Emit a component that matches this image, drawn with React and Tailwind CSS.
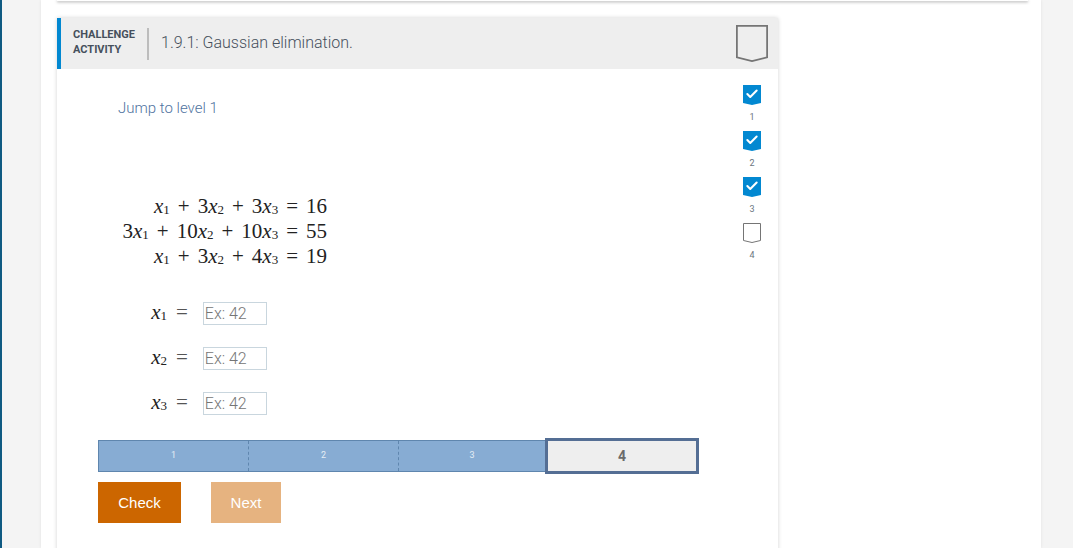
import { Check } from 'lucide-react';

const EQUATIONS = [
  [['', '1'], ['3', '2'], ['3', '3'], '16'],
  [['3', '1'], ['10', '2'], ['10', '3'], '55'],
  [['', '1'], ['3', '2'], ['4', '3'], '19'],
];

function Badge({ filled, className }) {
  return (
    <svg viewBox="0 0 18 20" className={className} preserveAspectRatio="none">
      {filled ? (
        <path d="M0 0H18V18L9 20L0 18Z" fill="#0288d1" />
      ) : (
        <path d="M.5 .5H17.5V17.5L9 19.5L.5 17.5Z" fill="none" stroke="#757575" />
      )}
    </svg>
  );
}

function Variable({ sub }) {
  return (
    <span className="inline-flex items-baseline">
      <i>x</i>
      <sub className="text-[13px] leading-none relative top-[1px] align-baseline">{sub}</sub>
    </span>
  );
}

function Term({ coef, sub }) {
  return (
    <span className="inline-flex items-baseline">
      {coef}
      <Variable sub={sub} />
    </span>
  );
}

function Equation({ terms }) {
  return (
    <div className="flex justify-end items-baseline h-[25px] leading-[25px]">
      <Term coef={terms[0][0]} sub={terms[0][1]} />
      <span className="mx-[8px]">+</span>
      <Term coef={terms[1][0]} sub={terms[1][1]} />
      <span className="mx-[8px]">+</span>
      <Term coef={terms[2][0]} sub={terms[2][1]} />
      <span className="mx-[8px]">=</span>
      <span>{terms[3]}</span>
    </div>
  );
}

function Answer({ sub }) {
  return (
    <div className="flex items-center h-[24px] font-['Liberation_Serif',serif] text-[21px] text-[#222]">
      <span className="w-[69px] text-right"><Variable sub={sub} /></span>
      <span className="ml-[9px] text-[#555]">=</span>
      <input
        readOnly
        placeholder="Ex: 42"
        className="ml-[15px] w-[64px] h-[23px] border border-[#c9d6de] px-[1px] pt-[1px] font-['Roboto',sans-serif] font-light text-[16px] placeholder:text-[#757575] outline-none"
      />
    </div>
  );
}

function Segment({ n, className }) {
  return (
    <div className={`flex items-center justify-center text-[9px] text-[#e4ecf5] ${className}`}>
      {n}
    </div>
  );
}

function Level({ n, done }) {
  return (
    <div className="flex flex-col items-center h-[46px]">
      <div className="relative w-[18px] h-[20px]">
        <Badge filled={done} className="w-[18px] h-[20px]" />
        {done && <Check size={14} strokeWidth={3.5} color="white" className="absolute left-[2px] top-[2px]" />}
      </div>
      <span className="mt-[7px] text-[9px] leading-[10px] text-[#6b7480]">{n}</span>
    </div>
  );
}

export default function App() {
  return (
    <div className="h-[548px] overflow-hidden bg-[#f4f4f4] border-l-2 border-[#0f5a82] font-['Roboto',sans-serif]">
      <div className="ml-[39px] w-[1000px] h-full bg-white pl-[16px] pr-[13px] shadow-[0_0_3px_rgba(0,0,0,0.08)]">
        <div className="h-[1px] bg-white shadow-[0_1px_3px_rgba(0,0,0,0.55)]" />

        <div className="mt-[17px] w-[721px] h-[600px] shadow-[0_0_4px_rgba(0,0,0,0.18)]">
          <div className="flex items-center h-[51px] bg-[#eeeeee] border-l-4 border-[#0288d1]">
            <div className="ml-[12px] w-[74px] -mt-[4px] text-[11px] leading-[15px] font-bold text-[#46505c]">
              <div>CHALLENGE</div>
              <div>ACTIVITY</div>
            </div>
            <div className="w-[2px] h-[32px] bg-[#bdbdbd]" />
            <div className="ml-[12px] flex-1 -mt-[1px] text-[16px] font-light text-[#46505c]">1.9.1: Gaussian elimination.</div>
            <Badge className="w-[32px] h-[37px] mr-[10px] -mt-[1px]" />
          </div>

          <div className="flex">
            <div className="w-[686px] pl-[41px]">
              <div className="pl-[20px] pt-[29px] h-[125px] text-[15px] leading-[20px] font-light text-[#4f73a0]">Jump to level 1</div>

              <div className="w-[229px] font-['Liberation_Serif',serif] text-[21px] text-[#222]">
                {EQUATIONS.map((terms, i) => <Equation key={i} terms={terms} />)}
              </div>

              <div className="mt-[32px] flex flex-col gap-[21px] w-[220px]">
                <Answer sub="1" />
                <Answer sub="2" />
                <Answer sub="3" />
              </div>

              <div className="mt-[23px] flex w-[601px] h-[36px] items-center">
                <div className="flex w-[447px] h-[32px] bg-[#87acd3] border border-[#5f86ae] border-r-0">
                  <Segment n="1" className="w-[150px] border-r border-dashed border-[#5f86ae]" />
                  <Segment n="2" className="w-[150px] border-r border-dashed border-[#5f86ae]" />
                  <Segment n="3" className="flex-1" />
                </div>
                <div className="flex-1 h-[36px] flex items-center justify-center bg-[#eeeeee] border-[3px] border-[#546e94] text-[14px] font-bold text-[#6b6b6b]">4</div>
              </div>

              <div className="mt-[8px] flex gap-[30px] font-['Liberation_Sans',sans-serif] text-[15px] text-white">
                <button className="w-[83px] h-[41px] pt-[1px] bg-[#cc6600]">Check</button>
                <button className="w-[70px] h-[41px] pt-[1px] bg-[#e6b380]">Next</button>
              </div>
            </div>

            <div className="w-[18px] pt-[16px]">
              <Level n="1" done />
              <Level n="2" done />
              <Level n="3" done />
              <Level n="4" />
            </div>
          </div>
        </div>
      </div>
    </div>
  );
}
